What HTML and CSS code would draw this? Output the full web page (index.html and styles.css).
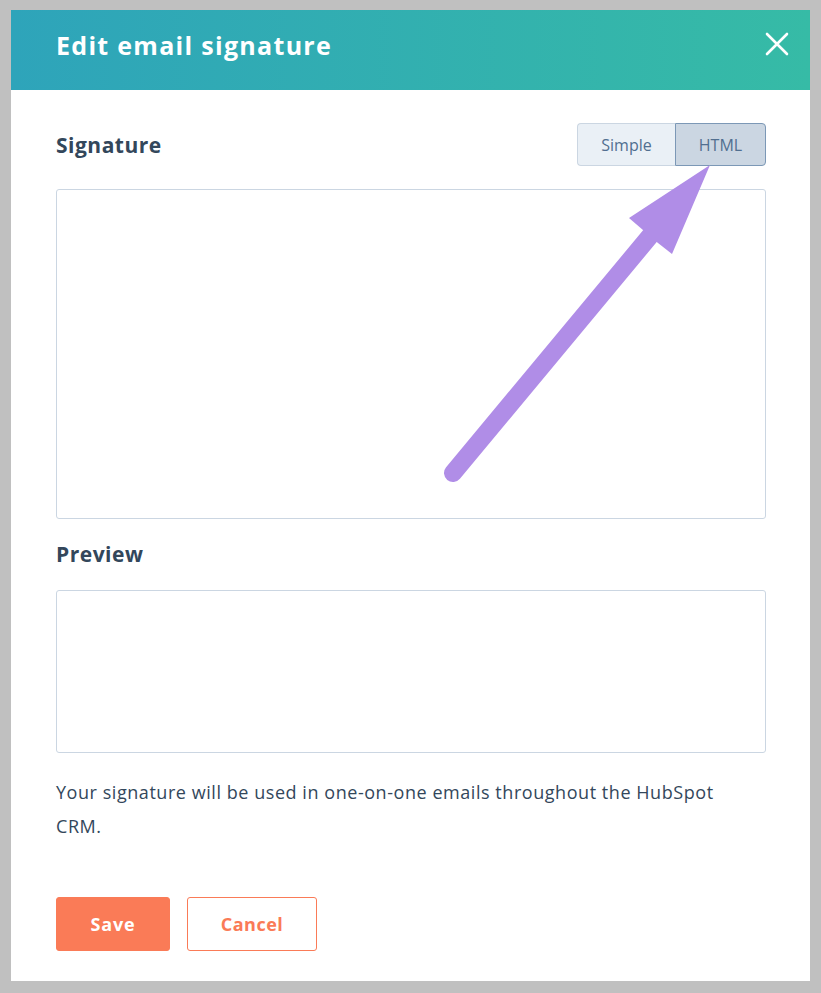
FILE: index.html
```html
<!DOCTYPE html>
<html>
<head>
<meta charset="utf-8">
<link rel="stylesheet" href="styles.css">
</head>
<body>
<div class="modal">
  <div class="header">
    <h1 class="title">Edit email signature</h1>
    <button class="close" aria-label="Close">
      <svg width="24" height="24" viewBox="0 0 24 24"><path d="M2 2 L22 22 M22 2 L2 22" stroke="#fff" stroke-width="2.6" stroke-linecap="round" fill="none"/></svg>
    </button>
  </div>
  <div class="body">
    <div class="sig-row">
      <div class="label">Signature</div>
      <div class="toggle">
        <span class="tog tog-simple">Simple</span>
        <span class="tog tog-html">HTML</span>
      </div>
    </div>
    <div class="box box-sig"></div>
    <div class="label label-preview">Preview</div>
    <div class="box box-preview"></div>
    <p class="help">Your signature will be used in one-on-one emails throughout the HubSpot CRM.</p>
    <div class="actions">
      <button class="btn btn-save">Save</button>
      <button class="btn btn-cancel">Cancel</button>
    </div>
  </div>
</div>
<svg class="arrow" width="821" height="993" viewBox="0 0 821 993">
  <line x1="453" y1="473" x2="650" y2="236" stroke="#b08de7" stroke-width="18" stroke-linecap="round"/>
  <polygon points="710,165 672,254 658,243 643,230 629,218" fill="#b08de7"/>
</svg>
</body>
</html>
```
FILE: styles.css
```css
html, body {
  margin: 0;
  padding: 0;
}
body {
  background: #c0c0c0;
  font-family: "Open Sans", "Noto Sans", sans-serif;
  color: #33475b;
  position: relative;
  width: 821px;
  height: 993px;
  overflow: hidden;
}
.modal {
  position: absolute;
  left: 11px;
  top: 10px;
  width: 799px;
  height: 971px;
  background: #fff;
  display: flex;
  flex-direction: column;
}
.header {
  height: 80px;
  background: linear-gradient(90deg, #2ea4ba 0%, #36bba6 100%);
  display: flex;
  align-items: center;
  justify-content: space-between;
  padding: 0 21px 0 45px;
  box-sizing: border-box;
}
.title {
  margin: 0;
  color: #fff;
  font-size: 25px;
  font-weight: 700;
  letter-spacing: 1.3px;
  padding-bottom: 10px;
}
.close {
  background: none;
  border: 0;
  padding: 0;
  width: 24px;
  height: 24px;
  margin-bottom: 12px;
  cursor: pointer;
}
.close svg { display: block; }
.body {
  padding: 33px 44px 0 45px;
  display: flex;
  flex-direction: column;
}
.sig-row {
  display: flex;
  justify-content: space-between;
  align-items: center;
  height: 43px;
}
.label {
  font-size: 21px;
  font-weight: 700;
  letter-spacing: 0.5px;
  color: #33475b;
}
.toggle {
  display: flex;
  height: 43px;
}
.tog {
  display: flex;
  align-items: center;
  justify-content: center;
  font-size: 16px;
  color: #516f90;
  box-sizing: border-box;
}
.tog-simple {
  width: 98px;
  background: #eaf0f6;
  border: 1px solid #cbd6e2;
  border-right: 0;
  border-radius: 4px 0 0 4px;
}
.tog-html {
  width: 91px;
  background: #cbd6e2;
  border: 1px solid #7c98b6;
  border-radius: 0 4px 4px 0;
}
.box {
  border: 1px solid #cbd6e2;
  border-radius: 3px;
  box-sizing: border-box;
}
.box-sig {
  margin-top: 23px;
  height: 330px;
}
.label-preview {
  margin-top: 22px;
  line-height: 26px;
}
.box-preview {
  margin-top: 23px;
  height: 163px;
}
.help {
  margin: 22px 0 0;
  font-size: 18px;
  line-height: 34px;
  letter-spacing: 0.55px;
  color: #33475b;
  max-width: 700px;
}
.actions {
  display: flex;
  gap: 17px;
  margin-top: 54px;
}
.btn {
  height: 54px;
  border-radius: 3px;
  font-family: "Open Sans", "Noto Sans", sans-serif;
  font-size: 18px;
  font-weight: 700;
  box-sizing: border-box;
  cursor: pointer;
}
.btn-save {
  width: 114px;
  background: #fa7b57;
  color: #fff;
  border: 1px solid #fa7b57;
  letter-spacing: 0.8px;
}
.btn-cancel {
  width: 130px;
  background: #fff;
  color: #fa7b57;
  border: 1px solid #fa7b57;
  letter-spacing: 0.5px;
}
.arrow {
  position: absolute;
  left: 0;
  top: 0;
  pointer-events: none;
}
```
